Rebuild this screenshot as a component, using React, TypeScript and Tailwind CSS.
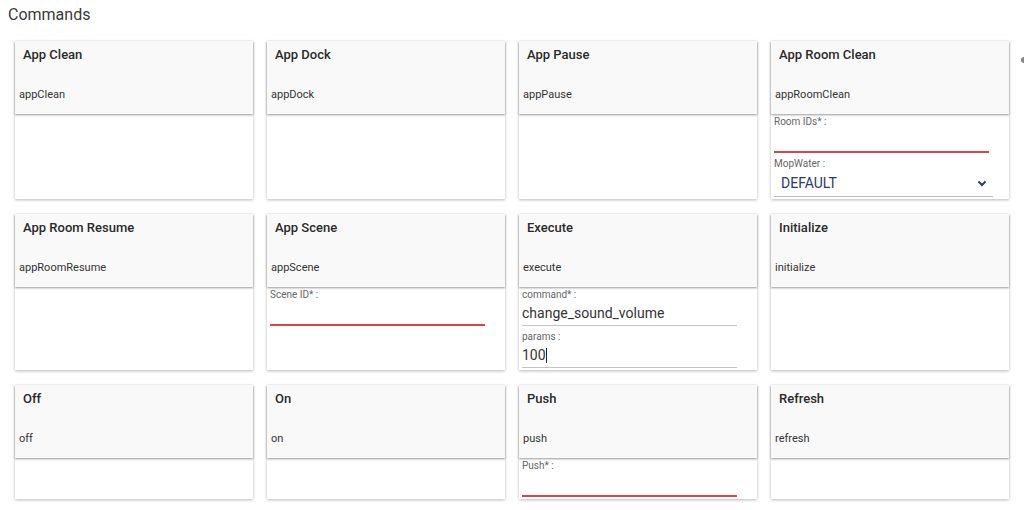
import React from "react";

type Field =
  | { kind: "input"; label: string; value?: string; cursor?: boolean; error?: boolean }
  | { kind: "select"; label: string; value: string };

type Cmd = { title: string; name: string; fields?: Field[] };

const rows: Cmd[][] = [
  [
    { title: "App Clean", name: "appClean" },
    { title: "App Dock", name: "appDock" },
    { title: "App Pause", name: "appPause" },
    {
      title: "App Room Clean",
      name: "appRoomClean",
      fields: [
        { kind: "input", label: "Room IDs* :", error: true },
        { kind: "select", label: "MopWater :", value: "DEFAULT" },
      ],
    },
  ],
  [
    { title: "App Room Resume", name: "appRoomResume" },
    { title: "App Scene", name: "appScene", fields: [{ kind: "input", label: "Scene ID* :", error: true }] },
    {
      title: "Execute",
      name: "execute",
      fields: [
        { kind: "input", label: "command* :", value: "change_sound_volume" },
        { kind: "input", label: "params :", value: "100", cursor: true },
      ],
    },
    { title: "Initialize", name: "initialize" },
  ],
  [
    { title: "Off", name: "off" },
    { title: "On", name: "on" },
    { title: "Push", name: "push", fields: [{ kind: "input", label: "Push* :", error: true }] },
    { title: "Refresh", name: "refresh" },
  ],
];

function FieldView({ f, first }: { f: Field; first: boolean }) {
  return (
    <div className={first ? "ml-[3px]" : "ml-[3px] mt-[5px]"}>
      <div className="text-[10px] leading-[12px] text-[#666]">{f.label}</div>
      {f.kind === "input" ? (
        <div
          className={
            f.error
              ? "w-[215px] h-[25px] border-b-2 border-[#e0404f] flex items-center text-[14px] text-[#333]"
              : "w-[215px] h-[25px] border-b border-[#c4c4c4] flex items-center text-[14px] text-[#333]"
          }
        >
          <span>{f.value}</span>
          {f.cursor && <span className="inline-block w-px h-[15px] bg-[#222]" />}
        </div>
      ) : (
        <div className="w-[219px] h-[27px] border-b border-[#bdbdbd] flex items-center justify-between pl-[7px] pr-[6px]">
          <span className="text-[14px] text-[#2b3a67]">{f.value}</span>
          <svg width="10" height="7" viewBox="0 0 10 7">
            <path d="M1.5 1.5 L5 5 L8.5 1.5" fill="none" stroke="#2b3a67" strokeWidth="2" />
          </svg>
        </div>
      )}
    </div>
  );
}

function Card({ c }: { c: Cmd }) {
  return (
    <div className="bg-white flex flex-col shadow-[0_1px_3px_rgba(0,0,0,0.28)]">
      <div className="relative z-10 h-[73px] bg-[#f9f9f9] shadow-[0_1px_2px_rgba(0,0,0,0.4)] flex flex-col">
        <div className="pt-[6px] pl-[8px] text-[13px] leading-[16px] font-medium text-[#2a2a2a]">{c.title}</div>
        <div className="mt-[25px] pl-[4px] text-[11px] leading-[14px] text-[#333]">{c.name}</div>
      </div>
      <div className="pt-[2px] flex flex-col">
        {c.fields?.map((f, i) => (
          <FieldView key={i} f={f} first={i === 0} />
        ))}
      </div>
    </div>
  );
}

export default function App() {
  return (
    <div
      className="relative w-[1024px] h-[510px] bg-white overflow-hidden"
      style={{ fontFamily: "Roboto, 'Liberation Sans', sans-serif" }}
    >
      <div className="pl-[8px] pt-[5px] text-[16px] leading-[19px] text-[#3a3a3a]">Commands</div>
      <div className="ml-[15px] mt-[17px] w-[994px] grid grid-cols-[238px_238px_238px_238px] grid-rows-[158px_156px_114px] gap-x-[14px] gap-y-[15px]">
        {rows.flat().map((c) => (
          <Card key={c.name} c={c} />
        ))}
      </div>
      <div className="absolute left-[1021px] top-[57px] w-[3px] h-[6px] rounded-l-sm bg-[#888]" />
    </div>
  );
}
